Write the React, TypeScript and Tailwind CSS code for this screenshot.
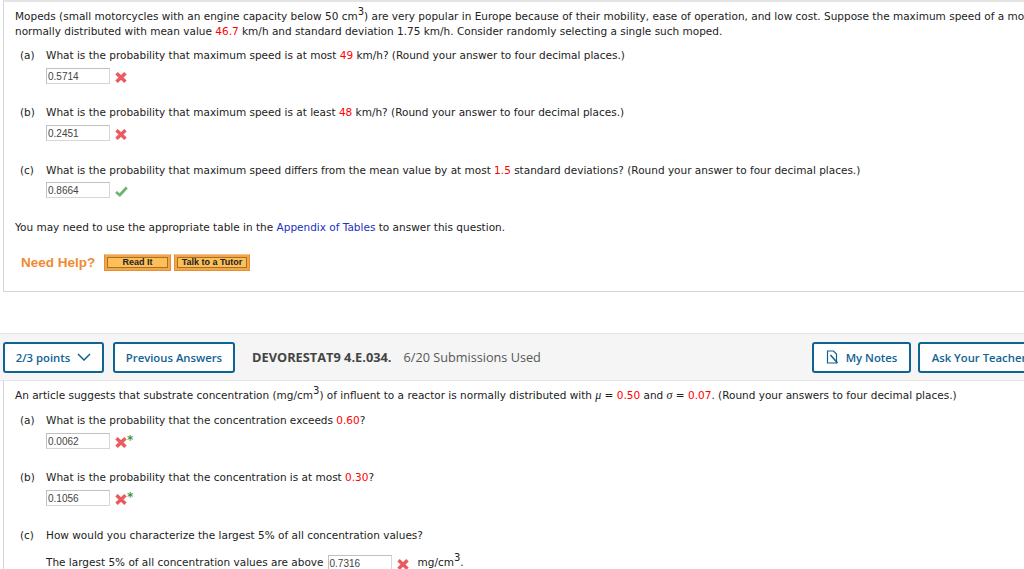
import React from "react";

const R = ({ children }: { children: React.ReactNode }) => <span className="text-[#ff0000]">{children}</span>;

const Cube = () => <sup className="text-[10px] relative -top-[5px] align-baseline">3</sup>;

const Cross = () => (
  <svg width="12" height="11" viewBox="0 0 12 11" className="shrink-0 mt-[4px]">
    <path d="M1.5 1.2 L10.5 9.8 M10.5 1.2 L1.5 9.8" stroke="#ea5a5f" strokeWidth="3.4" />
  </svg>
);
const Check = () => (
  <svg width="13" height="11" viewBox="0 0 13 11" className="shrink-0 mt-[4px]">
    <path d="M1 6 L4.8 9 L11.8 1.5" fill="none" stroke="#6fb56f" strokeWidth="2.8" />
  </svg>
);
const Star = () => <span className="text-[#3f9a3f] text-[12px] leading-none mt-[1px] font-bold">*</span>;

const Answer = ({ v, children }: { v: string; children: React.ReactNode }) => (
  <div className="flex items-start">
    <div className="w-[64px] h-[16px] border border-[#d6d6d6] border-t-[#c0c0c0] border-l-[#c0c0c0] bg-white pl-[1px] text-[10px] leading-[15px] text-[#444] font-['Liberation_Sans',sans-serif]">{v}</div>
    <span className="ml-[5px] flex items-start">{children}</span>
  </div>
);

const Question = ({ label, h, t = "h-[20px]", answer, children }: { label: string; h: string; t?: string; answer?: React.ReactNode; children: React.ReactNode }) => (
  <div className={`flex ${h} pl-[20px]`}>
    <span className="w-[26px] shrink-0">{label}</span>
    <div>
      <div className={t}>{children}</div>
      {answer}
    </div>
  </div>
);

const HelpBtn = ({ w, children }: { w: string; children: React.ReactNode }) => (
  <div className={`${w} h-[17px] bg-[#f3a54a] border border-[#e0913a] border-t-[#f5c48c] p-[2px] flex`}>
    <div className="flex-1 bg-[#fdbf5a] border border-[#a8701f] flex items-center justify-center text-[9px] text-[#222] font-bold font-['Liberation_Sans',sans-serif]">{children}</div>
  </div>
);

const HBtn = ({ w, children }: { w: string; children: React.ReactNode }) => (
  <div className={`${w} h-[31px] shrink-0 rounded-[3px] border-2 border-[#0f6294] flex items-center justify-center text-[#0f6294] text-[11.3px] font-semibold bg-white`}>{children}</div>
);

export default function App() {
  return (
    <div className="w-[1024px] h-[569px] overflow-hidden bg-white text-[10.5px] leading-[15px] text-[#222] font-['DejaVu_Sans',Verdana,sans-serif] whitespace-nowrap">
      <div className="h-[292px] ml-[3px] border-l border-t-2 border-b border-[#d4d4d4] border-t-[#e4e4e4] pt-[7px]">
        <div className="pl-[11px]">
          <div className="h-[15px]">Mopeds (small motorcycles with an engine capacity below 50 cm<Cube />) are very popular in Europe because of their mobility, ease of operation, and low cost. Suppose the maximum speed of a moped is</div>
          <div className="h-[17px]">normally distributed with mean value <R>46.7</R> km/h and standard deviation 1.75 km/h. Consider randomly selecting a single such moped.</div>
        </div>
        <div className="pt-[7px] -ml-[4px]">
          <Question label="(a)" h="h-[57px]" answer={<Answer v="0.5714"><Cross /></Answer>}>
            What is the probability that maximum speed is at most <R>49</R> km/h? (Round your answer to four decimal places.)
          </Question>
          <Question label="(b)" h="h-[58px]" answer={<Answer v="0.2451"><Cross /></Answer>}>
            What is the probability that maximum speed is at least <R>48</R> km/h? (Round your answer to four decimal places.)
          </Question>
          <Question label="(c)" h="h-[57px]" t="h-[19px]" answer={<Answer v="0.8664"><Check /></Answer>}>
            What is the probability that maximum speed differs from the mean value by at most <R>1.5</R> standard deviations? (Round your answer to four decimal places.)
          </Question>
        </div>
        <div className="h-[34px] pl-[11px]">You may need to use the appropriate table in the <span className="text-[#1a2fc4]">Appendix of Tables</span> to answer this question.</div>
        <div className="flex items-center gap-[3px] pl-[17px] h-[17px]">
          <span className="w-[80px] text-[13.5px] font-bold text-[#f08a30] font-['Liberation_Sans',sans-serif]">Need Help?</span>
          <HelpBtn w="w-[67px]">Read It</HelpBtn>
          <HelpBtn w="w-[76px]">Talk to a Tutor</HelpBtn>
        </div>
      </div>

      <div className="h-[41px]" />

      <div className="h-[48px] bg-[#f5f5f5] border-t border-b border-[#e4e4e4] flex items-center pl-[3px] font-['Open_Sans',sans-serif]">
        <HBtn w="w-[101px]">
          <span className="mr-[7px]">2/3 points</span>
          <svg width="14" height="8" viewBox="0 0 14 8"><path d="M1 1 L7 7 L13 1" fill="none" stroke="#0f6294" strokeWidth="1.5" /></svg>
        </HBtn>
        <div className="ml-[9px]"><HBtn w="w-[122px]">Previous Answers</HBtn></div>
        <span className="ml-[17px] text-[12.8px] font-bold text-[#444]">DEVORESTAT9 4.E.034.</span>
        <span className="ml-[12px] text-[12.7px] text-[#555]">6/20 Submissions Used</span>
        <div className="ml-auto flex gap-[7px] -mr-[16px]">
          <HBtn w="w-[99px]">
            <svg width="13" height="14" viewBox="0 0 13 14" className="mr-[7px]">
              <path d="M1.5 1 H7.5 L10.5 4 V13 H1.5 Z" fill="none" stroke="#0f6294" strokeWidth="1.2" />
              <path d="M4.5 5 L11.5 13" stroke="#0f6294" strokeWidth="1.5" />
            </svg>
            My Notes
          </HBtn>
          <HBtn w="w-[122px]">Ask Your Teacher</HBtn>
        </div>
      </div>

      <div className="ml-[3px] border-l border-[#d4d4d4] h-[189px] pt-[6px]">
        <div className="h-[24px] leading-[17px] pl-[11px]">An article suggests that substrate concentration (mg/cm<Cube />) of influent to a reactor is normally distributed with <i className="font-['Liberation_Serif',serif] text-[12px]">μ</i> = <R>0.50</R> and <i className="font-['Liberation_Serif',serif] text-[12px]">σ</i> = <R>0.07</R>. (Round your answers to four decimal places.)</div>
        <div className="-ml-[4px] pt-[2px]">
          <Question label="(a)" h="h-[57px]" answer={<Answer v="0.0062"><Cross /><Star /></Answer>}>
            What is the probability that the concentration exceeds <R>0.60</R>?
          </Question>
          <Question label="(b)" h="h-[58px]" answer={<Answer v="0.1056"><Cross /><Star /></Answer>}>
            What is the probability that the concentration is at most <R>0.30</R>?
          </Question>
          <Question label="(c)" h="h-[20px]">How would you characterize the largest 5% of all concentration values?</Question>
          <div className="pl-[46px] pt-[7px] flex items-start">
            The largest 5% of all concentration values are above
            <div className="ml-[4px]"><Answer v="0.7316"><Cross /></Answer></div>
            <span className="ml-[9px]">mg/cm<Cube />.</span>
          </div>
        </div>
      </div>
    </div>
  );
}
